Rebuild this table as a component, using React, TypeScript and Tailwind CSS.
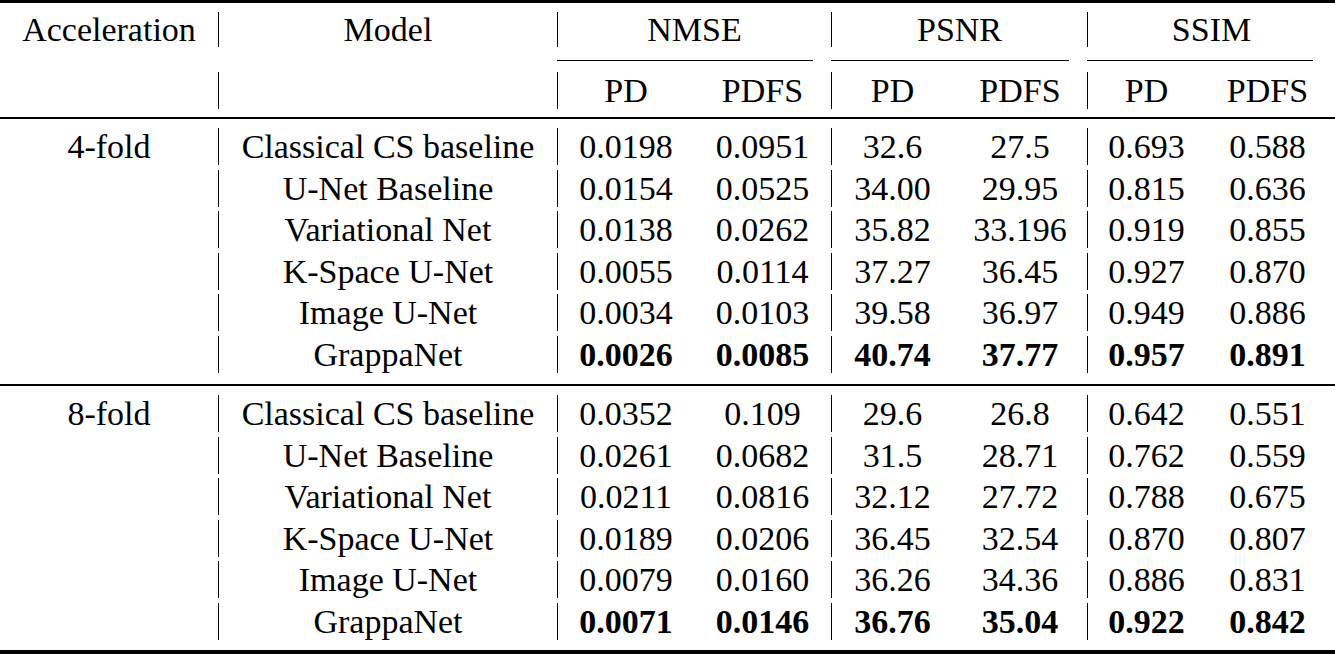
import React from 'react';

type Row = {
  model: string;
  values: string[];
  best?: boolean;
};

type Group = {
  label: string;
  rows: Row[];
};

const groups: Group[] = [
  {
    label: '4-fold',
    rows: [
      { model: 'Classical CS baseline', values: ['0.0198', '0.0951', '32.6', '27.5', '0.693', '0.588'] },
      { model: 'U-Net Baseline', values: ['0.0154', '0.0525', '34.00', '29.95', '0.815', '0.636'] },
      { model: 'Variational Net', values: ['0.0138', '0.0262', '35.82', '33.196', '0.919', '0.855'] },
      { model: 'K-Space U-Net', values: ['0.0055', '0.0114', '37.27', '36.45', '0.927', '0.870'] },
      { model: 'Image U-Net', values: ['0.0034', '0.0103', '39.58', '36.97', '0.949', '0.886'] },
      { model: 'GrappaNet', values: ['0.0026', '0.0085', '40.74', '37.77', '0.957', '0.891'], best: true },
    ],
  },
  {
    label: '8-fold',
    rows: [
      { model: 'Classical CS baseline', values: ['0.0352', '0.109', '29.6', '26.8', '0.642', '0.551'] },
      { model: 'U-Net Baseline', values: ['0.0261', '0.0682', '31.5', '28.71', '0.762', '0.559'] },
      { model: 'Variational Net', values: ['0.0211', '0.0816', '32.12', '27.72', '0.788', '0.675'] },
      { model: 'K-Space U-Net', values: ['0.0189', '0.0206', '36.45', '32.54', '0.870', '0.807'] },
      { model: 'Image U-Net', values: ['0.0079', '0.0160', '36.26', '34.36', '0.886', '0.831'] },
      { model: 'GrappaNet', values: ['0.0071', '0.0146', '36.76', '35.04', '0.922', '0.842'], best: true },
    ],
  },
];

// widths of the six metric columns; a vertical rule sits before columns 0, 2 and 4
const metricCols = [
  'w-[137px] border-l border-black',
  'w-[137px]',
  'w-[122px] border-l border-black',
  'w-[134px]',
  'w-[118px] border-l border-black',
  'w-[130px] pr-[5px]',
];

const BodyRow: React.FC<{ label: string; row: Row }> = ({ label, row }) => (
  <div className="flex h-[41.5px] leading-[37px] pb-[4.5px]">
    <div className="w-[218px] shrink-0 text-center">{label}</div>
    <div className="w-[339px] shrink-0 text-center border-l border-black">{row.model}</div>
    {row.values.map((v, i) => (
      <div key={i} className={`${metricCols[i]} shrink-0 text-center ${row.best ? 'font-bold' : ''}`}>
        {v}
      </div>
    ))}
  </div>
);

const App: React.FC = () => {
  return (
    <div className="w-[1335px] h-[654px] bg-white text-black text-[34px] [font-family:'Liberation_Serif',serif] overflow-hidden">
      {/* toprule */}
      <div className="h-[3px] bg-black" />
      <div className="h-[9px]" />

      {/* header row 1 */}
      <div className="flex h-[41px] leading-[35px] pb-[6px]">
        <div className="w-[218px] shrink-0 text-center">Acceleration</div>
        <div className="w-[339px] shrink-0 text-center border-l border-black">Model</div>
        <div className="w-[274px] shrink-0 text-center border-l border-black">NMSE</div>
        <div className="w-[256px] shrink-0 text-center border-l border-black">PSNR</div>
        <div className="w-[248px] shrink-0 text-center border-l border-black">SSIM</div>
      </div>

      {/* cmidrules */}
      <div className="flex h-[17px] pt-[6.5px]">
        <div className="w-[557px] shrink-0" />
        <div className="w-[274px] shrink-0 pr-[18px]">
          <div className="h-[1.5px] bg-black" />
        </div>
        <div className="w-[256px] shrink-0 pr-[18px]">
          <div className="h-[1.5px] bg-black" />
        </div>
        <div className="w-[248px] shrink-0 pr-[22px]">
          <div className="h-[1.5px] bg-black" />
        </div>
      </div>

      {/* header row 2 */}
      <div className="flex h-[43px] pt-[2px] leading-[37px] pb-[4px]">
        <div className="w-[218px] shrink-0" />
        <div className="w-[339px] shrink-0 border-l border-black" />
        {['PD', 'PDFS', 'PD', 'PDFS', 'PD', 'PDFS'].map((h, i) => (
          <div key={i} className={`${metricCols[i]} shrink-0 text-center`}>
            {h}
          </div>
        ))}
      </div>

      <div className="h-[4px]" />
      {/* midrule */}
      <div className="h-[2px] bg-black" />
      <div className="h-[9px]" />

      {groups[0].rows.map((row, i) => (
        <BodyRow key={row.model} label={i === 0 ? groups[0].label : ''} row={row} />
      ))}

      <div className="h-[7px]" />
      <div className="h-[2px] bg-black" />
      <div className="h-[9px]" />

      {groups[1].rows.map((row, i) => (
        <BodyRow key={row.model} label={i === 0 ? groups[1].label : ''} row={row} />
      ))}

      <div className="h-[6px]" />
      {/* bottomrule */}
      <div className="h-[4px] bg-black" />
    </div>
  );
};

export default App;
